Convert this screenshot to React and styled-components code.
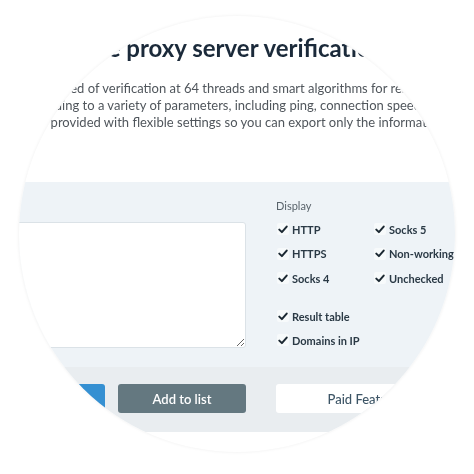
import React from 'react';
import styled, { createGlobalStyle } from 'styled-components';

const Global = createGlobalStyle`
  html, body { margin: 0; padding: 0; background: #ffffff; }
  body { font-family: Lato, "Open Sans", sans-serif; }
  * { box-sizing: border-box; }
`;

const Shadow = styled.div`
  width: 474px;
  height: 474px;
  filter: drop-shadow(0 0 1.5px rgba(0, 0, 0, 0.07));
`;

const Lens = styled.div`
  width: 474px;
  height: 474px;
  background: #ffffff;
  clip-path: circle(218px at 237px 234px);
  overflow: hidden;
  display: flex;
  flex-direction: column;
`;

const Intro = styled.header`
  padding-top: 33px;
  text-align: center;
`;

const Title = styled.h1`
  margin: 0;
  padding-right: 16px;
  font-size: 24px;
  line-height: 30px;
  font-weight: 700;
  color: #1b2a3a;
  white-space: nowrap;
`;

const Lead = styled.div`
  margin-top: 17px;
  font-size: 13px;
  line-height: 17px;
  color: #50565c;
`;

const Line = styled.div`
  white-space: nowrap;
  text-align: ${(p) => p.$align || 'center'};
  padding-right: ${(p) => p.$pr || 0}px;
`;

const Panel = styled.section`
  margin-top: 51px;
  background: #eef3f7;
`;

const Work = styled.div`
  display: grid;
  grid-template-columns: 246px 198px;
  column-gap: 30px;
  padding: 17px 0 15px;
`;

const InputCol = styled.div`
  padding-top: 23px;
`;

const ProxyInput = styled.textarea`
  display: block;
  width: 246px;
  height: 126px;
  border: 1px solid #dbe2e7;
  border-radius: 3px;
  background: #ffffff;
  resize: vertical;
  outline: none;
`;

const Options = styled.div`
  display: flex;
  flex-direction: column;
`;

const Caption = styled.div`
  font-size: 11px;
  line-height: 14px;
  color: #59636b;
  margin-bottom: 4px;
`;

const OptionGrid = styled.div`
  display: grid;
  grid-template-columns: 97px auto;
  grid-auto-rows: 24.5px;
`;

const ExtraGroup = styled.div`
  margin-top: 13.5px;
  display: grid;
  grid-auto-rows: 24px;
`;

const Option = styled.label`
  display: flex;
  align-items: center;
  gap: 3px;
  padding-left: 1px;
  font-size: 11px;
  font-weight: 700;
  color: #2a3945;
  white-space: nowrap;
`;

const Box = styled.span`
  width: 12px;
  height: 12px;
  display: flex;
  align-items: center;
  justify-content: center;
  border-radius: 2px;
  background: rgba(255, 255, 255, 0.55);
`;

const Actions = styled.div`
  display: grid;
  grid-template-columns: 246px 198px;
  column-gap: 30px;
  padding: 17px 0 19px;
  background: #e9edf0;
`;

const ButtonRow = styled.div`
  display: flex;
  gap: 13px;
`;

const Button = styled.button`
  height: 29px;
  width: ${(p) => p.$w}px;
  border: 0;
  border-radius: 3px;
  font-family: Lato, sans-serif;
  font-size: 13px;
  font-weight: ${(p) => (p.$variant === 'light' ? 500 : 600)};
  color: ${(p) => (p.$variant === 'light' ? '#3d5566' : '#ffffff')};
  background: ${(p) =>
    p.$variant === 'primary' ? '#3590d2' : p.$variant === 'muted' ? '#647880' : '#ffffff'};
  padding: 0;
`;

const Check = () => (
  <Box>
    <svg width="10" height="9" viewBox="0 0 10 9">
      <path d="M1.3 4.6 L3.9 7.1 L8.7 1.6" fill="none" stroke="#1c2933" strokeWidth="2" strokeLinecap="round" strokeLinejoin="round" />
    </svg>
  </Box>
);

const Opt = ({ children }) => (
  <Option>
    <Check />
    {children}
  </Option>
);

export default function App() {
  return (
    <>
      <Global />
      <Shadow>
        <Lens>
          <Intro>
            <Title>Free proxy server verification</Title>
            <Lead>
              <Line $pr={12}>High speed of verification at 64 threads and smart algorithms for real-time</Line>
              <Line $align="left">and according to a variety of parameters, including ping, connection speed, country</Line>
              <Line $align="left">Result is provided with flexible settings so you can export only the information you need.</Line>
            </Lead>
          </Intro>
          <Panel>
            <Work>
              <InputCol>
                <ProxyInput aria-label="Proxy list" />
              </InputCol>
              <Options>
                <Caption>Display</Caption>
                <OptionGrid>
                  <Opt>HTTP</Opt>
                  <Opt>Socks 5</Opt>
                  <Opt>HTTPS</Opt>
                  <Opt>Non-working</Opt>
                  <Opt>Socks 4</Opt>
                  <Opt>Unchecked</Opt>
                </OptionGrid>
                <ExtraGroup>
                  <Opt>Result table</Opt>
                  <Opt>Domains in IP</Opt>
                </ExtraGroup>
              </Options>
            </Work>
            <Actions>
              <ButtonRow>
                <Button $variant="primary" $w={105}>Check</Button>
                <Button $variant="muted" $w={128}>Add to list</Button>
              </ButtonRow>
              <div>
                <Button $variant="light" $w={180}>Paid Features</Button>
              </div>
            </Actions>
          </Panel>
        </Lens>
      </Shadow>
    </>
  );
}
